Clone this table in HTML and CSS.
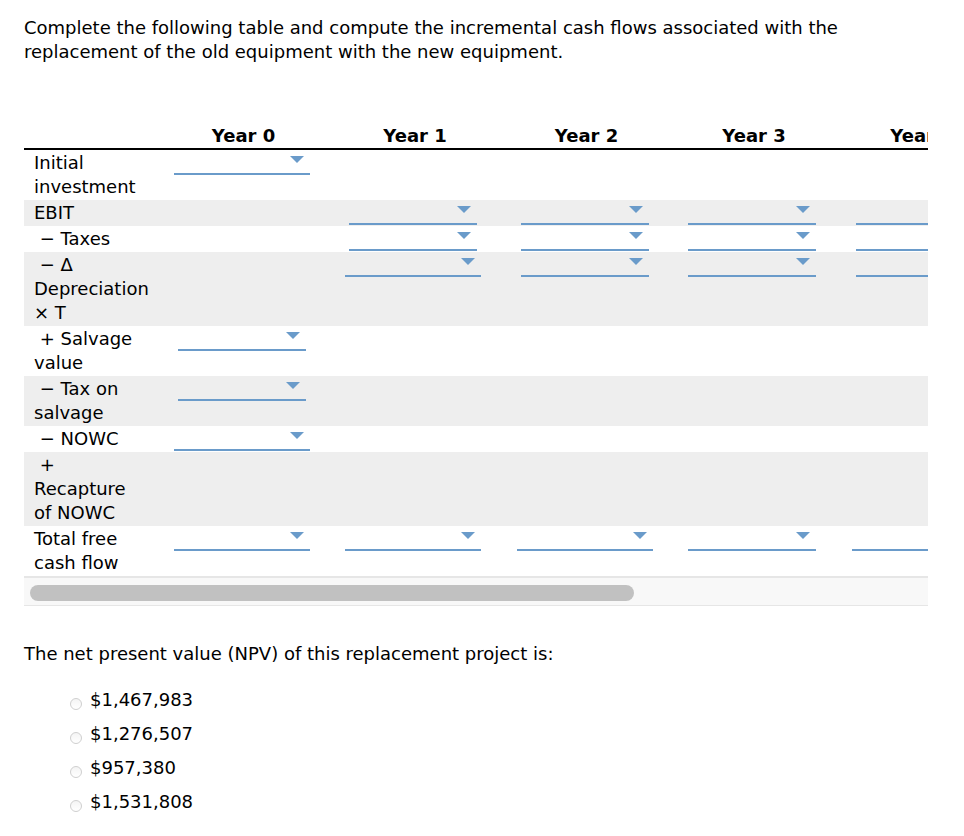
FILE: index.html
```html
<!DOCTYPE html>
<html>
<head>
<meta charset="utf-8">
<link rel="stylesheet" href="styles.css">
</head>
<body>
<p class="intro">Complete the following table and compute the incremental cash flows associated with the<br>replacement of the old equipment with the new equipment.</p>

<div class="scroller">
  <table class="cf">
    <colgroup>
      <col class="c-lbl"><col class="c-y0"><col class="c-y1"><col class="c-y2"><col class="c-y3"><col class="c-y4">
    </colgroup>
    <thead>
      <tr><th></th><th>Year 0</th><th>Year 1</th><th>Year 2</th><th>Year 3</th><th>Year 4</th></tr>
    </thead>
    <tbody>
      <tr>
        <td class="lbl">Initial<br>investment</td>
        <td><span class="dd wide"><i class="arr"></i></span></td>
        <td></td><td></td><td></td><td></td>
      </tr>
      <tr class="alt">
        <td class="lbl">EBIT</td>
        <td></td>
        <td><span class="dd"><i class="arr"></i></span></td>
        <td><span class="dd"><i class="arr"></i></span></td>
        <td><span class="dd"><i class="arr"></i></span></td>
        <td><span class="dd"><i class="arr"></i></span></td>
      </tr>
      <tr>
        <td class="lbl">&nbsp;− Taxes</td>
        <td></td>
        <td><span class="dd"><i class="arr"></i></span></td>
        <td><span class="dd"><i class="arr"></i></span></td>
        <td><span class="dd"><i class="arr"></i></span></td>
        <td><span class="dd"><i class="arr"></i></span></td>
      </tr>
      <tr class="alt">
        <td class="lbl">&nbsp;− Δ<br>Depreciation<br>× T</td>
        <td></td>
        <td><span class="dd wide"><i class="arr"></i></span></td>
        <td><span class="dd"><i class="arr"></i></span></td>
        <td><span class="dd"><i class="arr"></i></span></td>
        <td><span class="dd"><i class="arr"></i></span></td>
      </tr>
      <tr>
        <td class="lbl">&nbsp;+ Salvage<br>value</td>
        <td><span class="dd"><i class="arr"></i></span></td>
        <td></td><td></td><td></td><td></td>
      </tr>
      <tr class="alt">
        <td class="lbl">&nbsp;− Tax on<br>salvage</td>
        <td><span class="dd"><i class="arr"></i></span></td>
        <td></td><td></td><td></td><td></td>
      </tr>
      <tr>
        <td class="lbl">&nbsp;− NOWC</td>
        <td><span class="dd wide"><i class="arr"></i></span></td>
        <td></td><td></td><td></td><td></td>
      </tr>
      <tr class="alt">
        <td class="lbl">&nbsp;+<br>Recapture<br>of NOWC</td>
        <td></td><td></td><td></td><td></td><td></td>
      </tr>
      <tr>
        <td class="lbl">Total free<br>cash flow</td>
        <td><span class="dd wide"><i class="arr"></i></span></td>
        <td><span class="dd wide"><i class="arr"></i></span></td>
        <td><span class="dd wide"><i class="arr"></i></span></td>
        <td><span class="dd"><i class="arr"></i></span></td>
        <td><span class="dd wide"><i class="arr"></i></span></td>
      </tr>
    </tbody>
  </table>
</div>
<div class="hscroll"><div class="thumb"></div></div>

<p class="question">The net present value (NPV) of this replacement project is:</p>
<ul class="choices">
  <li><span class="radio"></span><span>$1,467,983</span></li>
  <li><span class="radio"></span><span>$1,276,507</span></li>
  <li><span class="radio"></span><span>$957,380</span></li>
  <li><span class="radio"></span><span>$1,531,808</span></li>
</ul>
</body>
</html>
```

FILE: styles.css
```css
html, body {
  background: #fff;
}
body {
  margin: 0;
  padding: 16px 0 0 24px;
  font-family: "DejaVu Sans", Verdana, sans-serif;
  font-size: 18px;
  line-height: 24px;
  color: #000;
}
.intro {
  margin: 0 0 60px;
}
.scroller {
  width: 904px;
  overflow: hidden;
}
.cf {
  border-collapse: collapse;
  table-layout: fixed;
  width: 982px;
}
.c-lbl { width: 132px; }
.c-y0 { width: 171px; }
.c-y1 { width: 172px; }
.c-y2 { width: 171px; }
.c-y3 { width: 164px; }
.c-y4 { width: 172px; }
.cf th {
  padding: 0 0 0 4px;
  height: 24px;
  font-weight: bold;
  text-align: center;
  border-bottom: 2px solid #000;
  white-space: nowrap;
  overflow: hidden;
}
.cf td {
  padding: 1px 0;
  vertical-align: top;
}
.cf td.lbl {
  padding: 1px 0 1px 10px;
  white-space: nowrap;
}
.cf tr.alt td {
  background: #eeeeee;
}
.dd {
  display: flex;
  justify-content: flex-end;
  align-items: flex-start;
  box-sizing: border-box;
  width: 128px;
  height: 24px;
  margin: 0 auto;
  padding: 5px 6px 0 0;
  border-bottom: 2px solid #6a9bca;
}
.dd.wide {
  width: 136px;
}
.arr {
  display: block;
  width: 0;
  height: 0;
  border-left: 7px solid transparent;
  border-right: 7px solid transparent;
  border-top: 7px solid #6a9bca;
}
.hscroll {
  width: 898px;
  height: 20px;
  border-top: 2px solid #e6e6e6;
  border-bottom: 1px solid #e6e6e6;
  background: #f8f8f8;
  padding: 7px 0 0 6px;
  box-sizing: content-box;
}
.thumb {
  width: 604px;
  height: 16px;
  border-radius: 8px;
  background: #c1c1c1;
}
.question {
  margin: 36px 0 0;
}
.choices {
  list-style: none;
  margin: 22px 0 0;
  padding: 0 0 0 46px;
  display: flex;
  flex-direction: column;
  gap: 10px;
}
.choices li {
  display: flex;
  align-items: flex-start;
  gap: 8px;
}
.radio {
  flex: none;
  width: 10px;
  height: 10px;
  margin-top: 10px;
  border: 1px solid #cfcfcf;
  border-radius: 50%;
  background: linear-gradient(#f4f4f4, #ffffff);
}
```
